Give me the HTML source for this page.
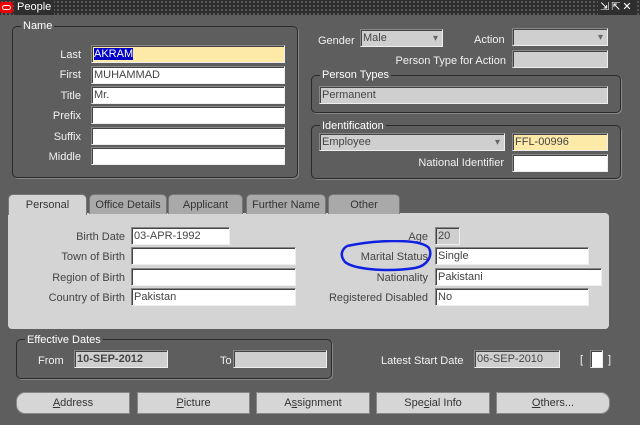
<!DOCTYPE html>
<html><head><style>
*{margin:0;padding:0;box-sizing:border-box}
body{width:640px;height:425px;background:#5e5e5e;font-family:"Liberation Sans",Arial,sans-serif;font-size:11px;position:relative;overflow:hidden}
.a{position:absolute}
.l{position:absolute;color:#f2f2f2;text-align:right;white-space:nowrap;margin-top:2px}
.ld{position:absolute;color:#444;text-align:right;white-space:nowrap;margin-top:2px}
.f{position:absolute;background:#fff;border:1px solid #888;border-right-color:#eee;border-bottom-color:#eee;box-shadow:inset 1px 1px 0 #444;color:#444;padding-left:2px;line-height:17px;height:18px;white-space:nowrap}
.g{background:#cfcfcf}
.y{background:#fde9a8}
.fr{position:absolute;border:1px solid #2a2a2a;border-radius:5px;box-shadow:1px 1px 0 #888}
.ft{position:absolute;background:#5e5e5e;color:#fff;padding:0 2px;font-size:11px;line-height:12px}
.dd::after{content:"▾";position:absolute;right:4px;top:0;color:#666;font-size:10px}
.tab{position:absolute;top:194px;height:20px;background:#a9a9a9;border:1px solid #777;border-bottom:none;border-radius:5px 5px 0 0;color:#333;text-align:center;line-height:20px}
.b{position:absolute;top:392px;height:22px;background:#d6d6d6;border:1px solid #888;color:#333;text-align:center;line-height:21px;font-size:11px}
u{text-decoration:underline}
</style></head><body>
<div class="a" style="left:0;top:0;width:640px;height:15px;background:#2e2e2e;background-image:radial-gradient(#666 0.8px,transparent 1px);background-size:4px 4px"></div>
<div class="a" style="left:0;top:2px;width:13px;height:11px;background:#e00;border-radius:2px"><div class="a" style="left:2px;top:3px;width:9px;height:5px;border:1.5px solid #fff;border-radius:3px"></div></div>
<div class="a" style="left:14px;top:0;height:15px;line-height:15px;background:#2e2e2e;color:#fff;padding:0 3px;font-size:11px">People</div>
<div class="a" style="left:598px;top:0;height:15px;line-height:15px;background:#2e2e2e;color:#fff;padding:0 2px;font-size:11px;letter-spacing:2px">⇲⇱✕</div>

<div class="fr" style="left:12px;top:26px;width:286px;height:152px"></div>
<div class="ft" style="left:21px;top:20px">Name</div>
<div class="l" style="right:559px;top:47px">Last</div>
<div class="f y" style="left:91px;top:45px;width:194px"><span style="background:#0000c8;color:#fff">AKRAM</span></div>
<div class="l" style="right:559px;top:67px">First</div>
<div class="f" style="left:91px;top:66px;width:194px">MUHAMMAD</div>
<div class="l" style="right:559px;top:88px">Title</div>
<div class="f" style="left:91px;top:86px;width:194px">Mr.</div>
<div class="l" style="right:559px;top:108px">Prefix</div>
<div class="f" style="left:91px;top:106px;width:194px"></div>
<div class="l" style="right:559px;top:129px">Suffix</div>
<div class="f" style="left:91px;top:127px;width:194px"></div>
<div class="l" style="right:559px;top:149px">Middle</div>
<div class="f" style="left:91px;top:147px;width:194px"></div>

<div class="l" style="left:318px;top:33px">Gender</div>
<div class="f g dd" style="left:360px;top:29px;width:83px">Male</div>
<div class="l" style="left:474px;top:32px">Action</div>
<div class="f g dd" style="left:512px;top:28px;width:96px"></div>
<div class="l" style="right:134px;top:53px">Person Type for Action</div>
<div class="f g" style="left:512px;top:50px;width:96px"></div>

<div class="fr" style="left:311px;top:75px;width:310px;height:38px"></div>
<div class="ft" style="left:320px;top:69px">Person Types</div>
<div class="f g" style="left:319px;top:86px;width:289px">Permanent</div>

<div class="fr" style="left:311px;top:125px;width:310px;height:54px"></div>
<div class="ft" style="left:320px;top:120px">Identification</div>
<div class="f g dd" style="left:319px;top:133px;width:186px">Employee</div>
<div class="f y" style="left:512px;top:133px;width:96px">FFL-00996</div>
<div class="l" style="right:136px;top:155px">National Identifier</div>
<div class="f" style="left:512px;top:154px;width:96px"></div>

<div class="a" style="left:8px;top:213px;width:601px;height:116px;background:#d4d4d4;border-radius:0 4px 4px 4px"></div>
<div class="tab" style="left:8px;width:79px;background:#d4d4d4;height:21px">Personal</div>
<div class="tab" style="left:89px;width:78px">Office Details</div>
<div class="tab" style="left:168px;width:75px">Applicant</div>
<div class="tab" style="left:246px;width:80px">Further Name</div>
<div class="tab" style="left:328px;width:72px">Other</div>

<div class="ld" style="right:515px;top:229px">Birth Date</div>
<div class="f" style="left:131px;top:227px;width:99px">03-APR-1992</div>
<div class="ld" style="right:515px;top:249px">Town of Birth</div>
<div class="f" style="left:131px;top:247px;width:165px"></div>
<div class="ld" style="right:515px;top:270px">Region of Birth</div>
<div class="f" style="left:131px;top:268px;width:165px"></div>
<div class="ld" style="right:515px;top:290px">Country of Birth</div>
<div class="f" style="left:131px;top:288px;width:165px">Pakistan</div>

<div class="ld" style="right:212px;top:229px">Age</div>
<div class="f g" style="left:435px;top:227px;width:25px">20</div>
<div class="ld" style="right:212px;top:249px">Marital Status</div>
<div class="f" style="left:435px;top:247px;width:154px">Single</div>
<div class="ld" style="right:212px;top:270px">Nationality</div>
<div class="f" style="left:435px;top:268px;width:167px">Pakistani</div>
<div class="ld" style="right:212px;top:290px">Registered Disabled</div>
<div class="f" style="left:435px;top:288px;width:154px">No</div>
<svg class="a" style="left:335px;top:240px" width="100" height="34"><path d="M12 6 C40 0 85 -2 94 8 C98 16 92 26 80 28 C55 32 20 30 10 22 C5 16 6 10 12 6" fill="none" stroke="#1020e0" stroke-width="2.5"/></svg>

<div class="fr" style="left:16px;top:339px;width:316px;height:40px"></div>
<div class="ft" style="left:25px;top:334px">Effective Dates</div>
<div class="l" style="left:38px;top:353px">From</div>
<div class="f g" style="left:74px;top:350px;width:94px;font-weight:bold">10-SEP-2012</div>
<div class="l" style="left:220px;top:353px">To</div>
<div class="f g" style="left:233px;top:350px;width:94px"></div>
<div class="l" style="left:381px;top:353px">Latest Start Date</div>
<div class="f g" style="left:474px;top:350px;width:86px">06-SEP-2010</div>
<div class="l" style="left:580px;top:352px">[</div>
<div class="f" style="left:590px;top:350px;width:13px"></div>
<div class="l" style="left:608px;top:352px">]</div>

<div class="b" style="left:16px;width:114px;border-radius:9px 0 0 9px"><u>A</u>ddress</div>
<div class="b" style="left:137px;width:113px"><u>P</u>icture</div>
<div class="b" style="left:256px;width:114px">A<u>s</u>signment</div>
<div class="b" style="left:376px;width:114px">Spe<u>c</u>ial Info</div>
<div class="b" style="left:496px;width:114px;border-radius:0 9px 9px 0"><u>O</u>thers...</div>
</body></html>
